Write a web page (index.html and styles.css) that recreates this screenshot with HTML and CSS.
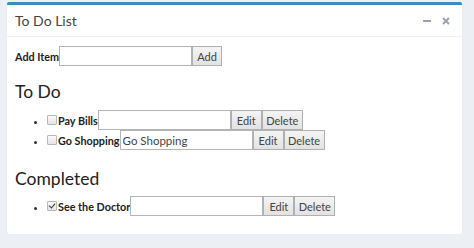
FILE: index.html
```html
<!DOCTYPE html>
<html>
<head>
<meta charset="utf-8">
<link rel="stylesheet" href="styles.css">
</head>
<body>
<div class="page">
  <div class="box">
    <div class="box-header">
      <h3 class="box-title">To Do List</h3>
      <div class="tools">
        <span class="tool"><svg width="8" height="8" viewBox="0 0 8 8"><rect x="0" y="3" width="8" height="2" fill="#97a0b3"/></svg></span>
        <span class="tool"><svg width="8" height="8" viewBox="0 0 8 8"><path d="M1 1 L7 7 M7 1 L1 7" stroke="#97a0b3" stroke-width="1.8"/></svg></span>
      </div>
    </div>
    <div class="box-body">
      <div class="add-row">
        <label class="lbl">Add Item</label><input class="txt" type="text"><button class="btn btn-add">Add</button>
      </div>
      <h3 class="section">To Do</h3>
      <ul class="items">
        <li><span class="item"><input class="chk" type="checkbox"><label class="lbl">Pay Bills</label><input class="txt" type="text"><button class="btn btn-edit">Edit</button><button class="btn btn-del">Delete</button></span></li>
        <li><span class="item"><input class="chk" type="checkbox"><label class="lbl">Go Shopping</label><input class="txt" type="text" value="Go Shopping"><button class="btn btn-edit">Edit</button><button class="btn btn-del">Delete</button></span></li>
      </ul>
      <h3 class="section section-done">Completed</h3>
      <ul class="items">
        <li><span class="item"><input class="chk" type="checkbox" checked><label class="lbl">See the Doctor</label><input class="txt" type="text"><button class="btn btn-edit">Edit</button><button class="btn btn-del">Delete</button></span></li>
      </ul>
    </div>
  </div>
</div>
</body>
</html>
```
FILE: styles.css
```css
html, body {
  margin: 0;
  padding: 0;
  background: #ecf0f5;
  font-family: Lato, "Open Sans", sans-serif;
  color: #333;
}
.page {
  padding: 2px 12px 0 7px;
}
.box {
  background: #fff;
  border-top: 3px solid #3c8dbc;
  border-radius: 2px;
  height: 229px;
  box-shadow: 0 1px 1px rgba(0,0,0,0.08);
}
.box-header {
  display: flex;
  align-items: center;
  justify-content: space-between;
  height: 31px;
  padding: 0 8px;
  border-bottom: 1px solid #f0f0f0;
}
.box-title {
  margin: 0;
  font-size: 14px;
  font-weight: 400;
  color: #444;
}
.tools {
  display: flex;
  gap: 11px;
  padding-right: 4px;
}
.tool {
  display: flex;
}
.box-body {
  padding: 9px 8px 0 8px;
}
.add-row, .item {
  display: flex;
  align-items: center;
  height: 20px;
}
.lbl {
  font-weight: 700;
  font-size: 10.8px;
  color: #222;
}
.txt {
  width: 133px;
  height: 20px;
  box-sizing: border-box;
  margin: 0;
  border: 1px solid #b4b4b4;
  padding: 1px 2px;
  font-family: Lato, sans-serif;
  font-size: 11.5px;
  color: #444;
}
.btn {
  height: 20px;
  margin: 0;
  padding: 0;
  box-sizing: border-box;
  border: 1px solid #b0b0b0;
  background: linear-gradient(#f4f4f4, #e2e2e2);
  font-family: Lato, sans-serif;
  font-size: 11px;
  color: #444;
  text-align: center;
}
.btn-add { width: 30px; }
.btn-edit { width: 31px; }
.btn-del { width: 41px; }
.section {
  margin: 15px 0 7px;
  font-size: 17.5px;
  font-weight: 400;
  color: #222;
  line-height: 22px;
}
.section-done {
  margin: 18px 0 6px;
}
.items {
  margin: 0;
  padding-left: 32px;
  list-style: disc;
  font-size: 10px;
}
.items li::marker {
  color: #333;
}
.chk {
  appearance: none;
  -webkit-appearance: none;
  width: 10px;
  height: 10px;
  margin: 0 1px 0 0;
  box-sizing: border-box;
  border: 1px solid #b8b8b8;
  border-radius: 1px;
  background: linear-gradient(#fafafa, #e4e4e4);
  position: relative;
}
.chk:checked::after {
  content: "";
  position: absolute;
  left: 2px;
  top: 0px;
  width: 3px;
  height: 5px;
  border: solid #333;
  border-width: 0 1.5px 1.5px 0;
  transform: rotate(40deg);
}
```
